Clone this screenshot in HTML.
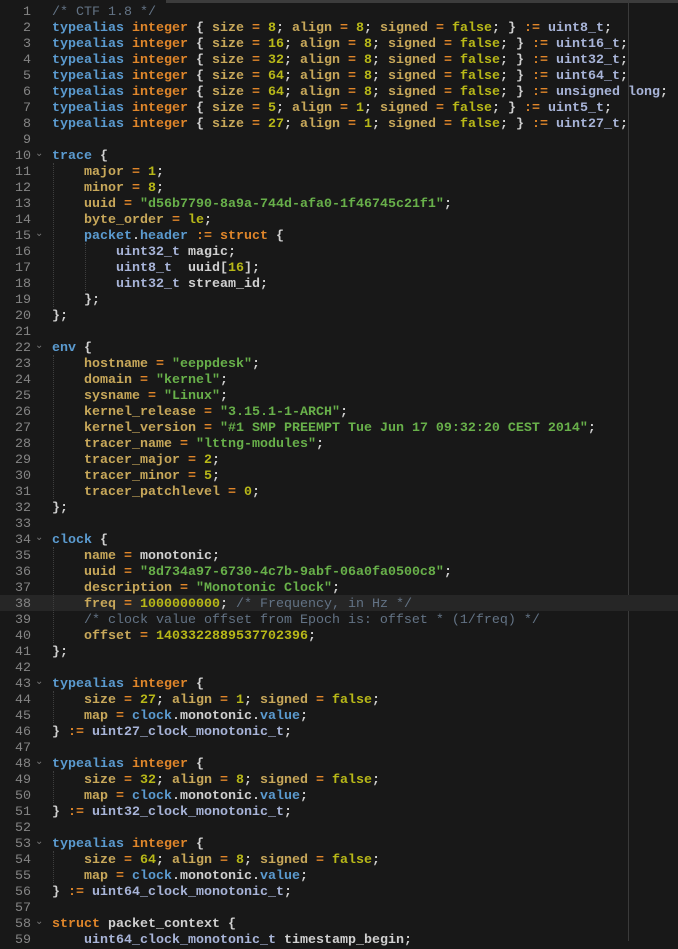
<!DOCTYPE html>
<html><head><meta charset="utf-8"><style>
body{margin:0;background:#181818;width:678px;height:941px;overflow:hidden;position:relative;font-family:"Liberation Mono",monospace;font-size:13.33px;}
.top{position:absolute;left:166px;top:0;right:0;height:3px;background:#3c3c3c}
.ruler{position:absolute;left:628px;top:0;bottom:0;width:1px;background:#3a3a3a}
.hl{position:absolute;left:0;right:0;top:595px;height:16px;background:#262626}
.ln{position:absolute;left:0;top:5px;width:31px;text-align:right;color:#858585;line-height:16px;white-space:pre}
.fa{position:absolute;left:35px;color:#777;font-size:10px;line-height:16px}
pre{position:absolute;left:52px;top:5px;margin:0;font:inherit;line-height:16px;color:#d0d0d0;font-weight:bold}
.g{position:absolute;width:0;border-left:1px dotted #3e3e3e}
.k{color:#5b9bd0}.o{color:#e0862a}.f{color:#c8a85a}.n{color:#b8b818}.s{color:#68b04a}.c{color:#637385;font-weight:normal}.t{color:#a8b4d8}
</style></head><body>
<div class="top"></div><div class="ruler"></div><div class="hl"></div>
<div class="g" style="left:53px;top:163px;height:144px"></div>
<div class="g" style="left:85px;top:243px;height:48px"></div>
<div class="g" style="left:53px;top:355px;height:144px"></div>
<div class="g" style="left:53px;top:547px;height:96px"></div>
<div class="g" style="left:53px;top:691px;height:32px"></div>
<div class="g" style="left:53px;top:771px;height:32px"></div>
<div class="g" style="left:53px;top:851px;height:32px"></div>
<div class="ln">1
2
3
4
5
6
7
8
9
10
11
12
13
14
15
16
17
18
19
20
21
22
23
24
25
26
27
28
29
30
31
32
33
34
35
36
37
38
39
40
41
42
43
44
45
46
47
48
49
50
51
52
53
54
55
56
57
58
59</div>
<div class="fa" style="top:147px">⌄</div>
<div class="fa" style="top:227px">⌄</div>
<div class="fa" style="top:339px">⌄</div>
<div class="fa" style="top:531px">⌄</div>
<div class="fa" style="top:675px">⌄</div>
<div class="fa" style="top:755px">⌄</div>
<div class="fa" style="top:835px">⌄</div>
<div class="fa" style="top:915px">⌄</div>
<pre><span class="c">/* CTF 1.8 */</span>
<span class="k">typealias</span> <span class="o">integer</span> { <span class="f">size</span> <span class="o">=</span> <span class="n">8</span>; <span class="f">align</span> <span class="o">=</span> <span class="n">8</span>; <span class="f">signed</span> <span class="o">=</span> <span class="n">false</span>; } <span class="o">:=</span> <span class="t">uint8_t</span>;
<span class="k">typealias</span> <span class="o">integer</span> { <span class="f">size</span> <span class="o">=</span> <span class="n">16</span>; <span class="f">align</span> <span class="o">=</span> <span class="n">8</span>; <span class="f">signed</span> <span class="o">=</span> <span class="n">false</span>; } <span class="o">:=</span> <span class="t">uint16_t</span>;
<span class="k">typealias</span> <span class="o">integer</span> { <span class="f">size</span> <span class="o">=</span> <span class="n">32</span>; <span class="f">align</span> <span class="o">=</span> <span class="n">8</span>; <span class="f">signed</span> <span class="o">=</span> <span class="n">false</span>; } <span class="o">:=</span> <span class="t">uint32_t</span>;
<span class="k">typealias</span> <span class="o">integer</span> { <span class="f">size</span> <span class="o">=</span> <span class="n">64</span>; <span class="f">align</span> <span class="o">=</span> <span class="n">8</span>; <span class="f">signed</span> <span class="o">=</span> <span class="n">false</span>; } <span class="o">:=</span> <span class="t">uint64_t</span>;
<span class="k">typealias</span> <span class="o">integer</span> { <span class="f">size</span> <span class="o">=</span> <span class="n">64</span>; <span class="f">align</span> <span class="o">=</span> <span class="n">8</span>; <span class="f">signed</span> <span class="o">=</span> <span class="n">false</span>; } <span class="o">:=</span> <span class="t">unsigned long</span>;
<span class="k">typealias</span> <span class="o">integer</span> { <span class="f">size</span> <span class="o">=</span> <span class="n">5</span>; <span class="f">align</span> <span class="o">=</span> <span class="n">1</span>; <span class="f">signed</span> <span class="o">=</span> <span class="n">false</span>; } <span class="o">:=</span> <span class="t">uint5_t</span>;
<span class="k">typealias</span> <span class="o">integer</span> { <span class="f">size</span> <span class="o">=</span> <span class="n">27</span>; <span class="f">align</span> <span class="o">=</span> <span class="n">1</span>; <span class="f">signed</span> <span class="o">=</span> <span class="n">false</span>; } <span class="o">:=</span> <span class="t">uint27_t</span>;

<span class="k">trace</span> {
    <span class="f">major</span> <span class="o">=</span> <span class="n">1</span>;
    <span class="f">minor</span> <span class="o">=</span> <span class="n">8</span>;
    <span class="f">uuid</span> <span class="o">=</span> <span class="s">"d56b7790-8a9a-744d-afa0-1f46745c21f1"</span>;
    <span class="f">byte_order</span> <span class="o">=</span> <span class="n">le</span>;
    <span class="k">packet</span>.<span class="k">header</span> <span class="o">:=</span> <span class="o">struct</span> {
        <span class="t">uint32_t</span> magic;
        <span class="t">uint8_t</span>  uuid[<span class="n">16</span>];
        <span class="t">uint32_t</span> stream_id;
    };
};

<span class="k">env</span> {
    <span class="f">hostname</span> <span class="o">=</span> <span class="s">"eeppdesk"</span>;
    <span class="f">domain</span> <span class="o">=</span> <span class="s">"kernel"</span>;
    <span class="f">sysname</span> <span class="o">=</span> <span class="s">"Linux"</span>;
    <span class="f">kernel_release</span> <span class="o">=</span> <span class="s">"3.15.1-1-ARCH"</span>;
    <span class="f">kernel_version</span> <span class="o">=</span> <span class="s">"#1 SMP PREEMPT Tue Jun 17 09:32:20 CEST 2014"</span>;
    <span class="f">tracer_name</span> <span class="o">=</span> <span class="s">"lttng-modules"</span>;
    <span class="f">tracer_major</span> <span class="o">=</span> <span class="n">2</span>;
    <span class="f">tracer_minor</span> <span class="o">=</span> <span class="n">5</span>;
    <span class="f">tracer_patchlevel</span> <span class="o">=</span> <span class="n">0</span>;
};

<span class="k">clock</span> {
    <span class="f">name</span> <span class="o">=</span> monotonic;
    <span class="f">uuid</span> <span class="o">=</span> <span class="s">"8d734a97-6730-4c7b-9abf-06a0fa0500c8"</span>;
    <span class="f">description</span> <span class="o">=</span> <span class="s">"Monotonic Clock"</span>;
    <span class="f">freq</span> <span class="o">=</span> <span class="n">1000000000</span>; <span class="c">/* Frequency, in Hz */</span>
    <span class="c">/* clock value offset from Epoch is: offset * (1/freq) */</span>
    <span class="f">offset</span> <span class="o">=</span> <span class="n">1403322889537702396</span>;
};

<span class="k">typealias</span> <span class="o">integer</span> {
    <span class="f">size</span> <span class="o">=</span> <span class="n">27</span>; <span class="f">align</span> <span class="o">=</span> <span class="n">1</span>; <span class="f">signed</span> <span class="o">=</span> <span class="n">false</span>;
    <span class="f">map</span> <span class="o">=</span> <span class="k">clock</span>.monotonic.<span class="k">value</span>;
} <span class="o">:=</span> <span class="t">uint27_clock_monotonic_t</span>;

<span class="k">typealias</span> <span class="o">integer</span> {
    <span class="f">size</span> <span class="o">=</span> <span class="n">32</span>; <span class="f">align</span> <span class="o">=</span> <span class="n">8</span>; <span class="f">signed</span> <span class="o">=</span> <span class="n">false</span>;
    <span class="f">map</span> <span class="o">=</span> <span class="k">clock</span>.monotonic.<span class="k">value</span>;
} <span class="o">:=</span> <span class="t">uint32_clock_monotonic_t</span>;

<span class="k">typealias</span> <span class="o">integer</span> {
    <span class="f">size</span> <span class="o">=</span> <span class="n">64</span>; <span class="f">align</span> <span class="o">=</span> <span class="n">8</span>; <span class="f">signed</span> <span class="o">=</span> <span class="n">false</span>;
    <span class="f">map</span> <span class="o">=</span> <span class="k">clock</span>.monotonic.<span class="k">value</span>;
} <span class="o">:=</span> <span class="t">uint64_clock_monotonic_t</span>;

<span class="o">struct</span> packet_context {
    <span class="t">uint64_clock_monotonic_t</span> timestamp_begin;</pre>
</body></html>
